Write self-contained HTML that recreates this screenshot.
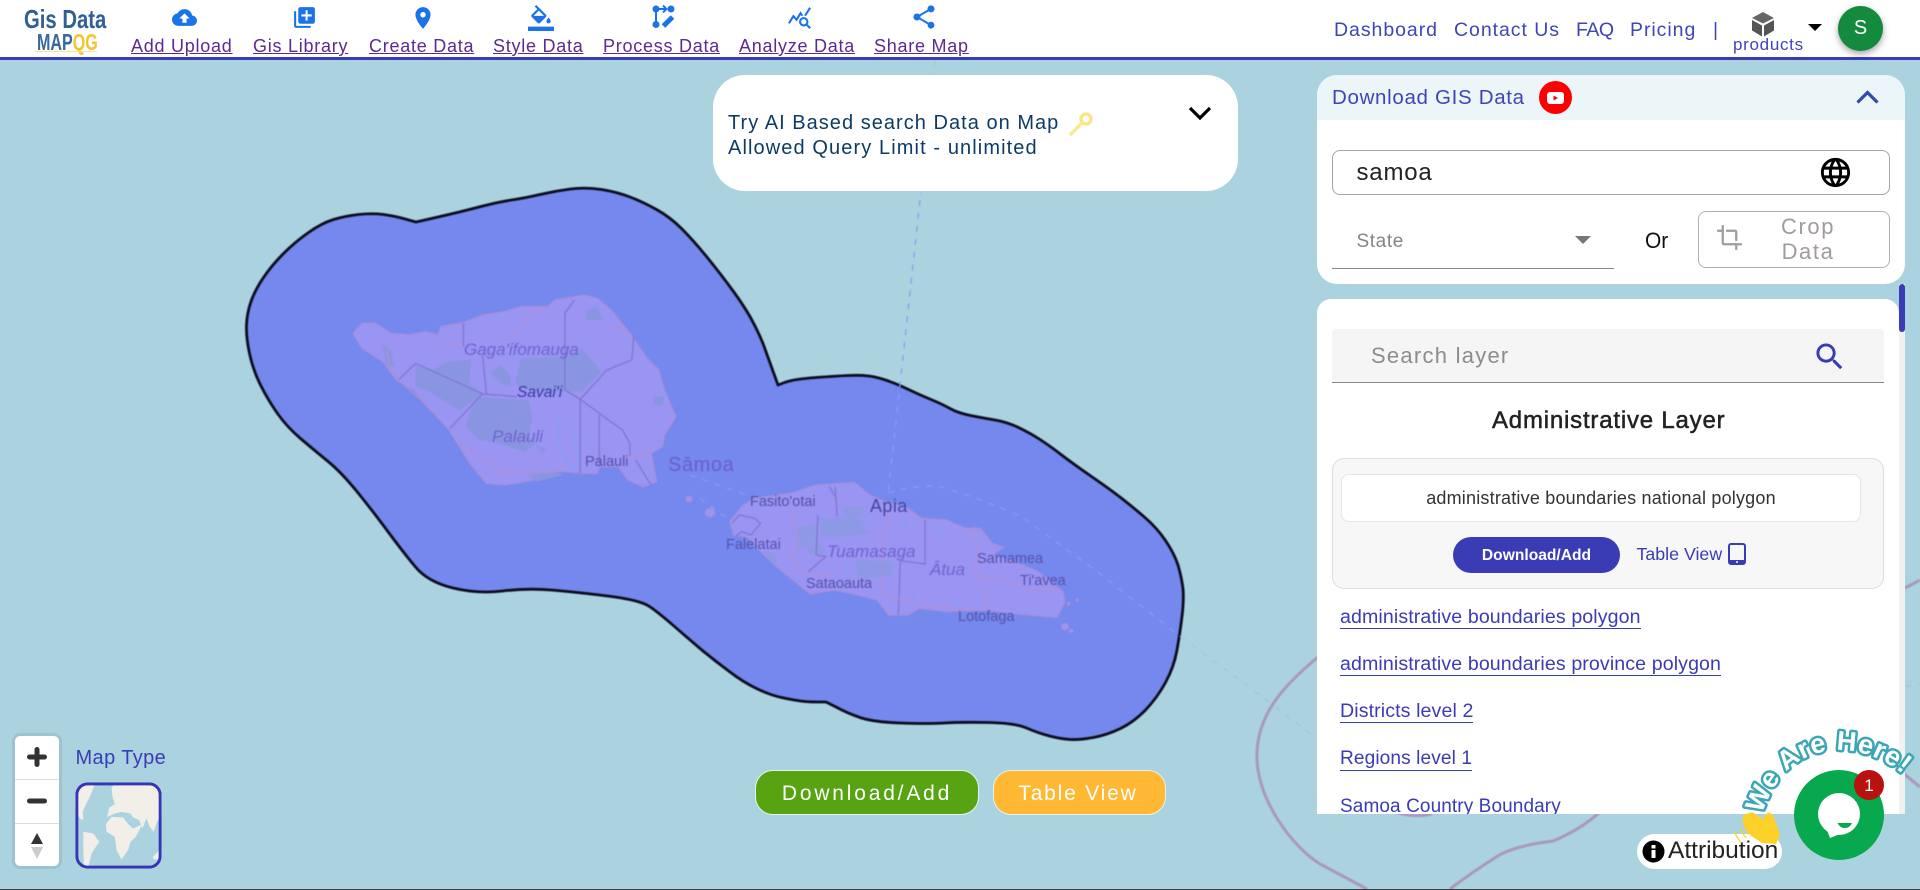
<!DOCTYPE html>
<html lang="en">
<head>
<meta charset="utf-8">
<title>GIS Data MAPOG</title>
<style>
html,body{margin:0;padding:0;width:1920px;height:890px;overflow:hidden;background:#aad3df;font-family:"Liberation Sans",sans-serif}
.a{position:absolute;white-space:nowrap;line-height:1}
#map{position:absolute;left:0;top:0;filter:blur(.45px)}
#hdr{position:absolute;left:0;top:0;width:1920px;height:57px;background:#fff;border-bottom:3px solid #3a3cb5}
.nav{font-size:18px;color:#5b2a92;text-decoration:underline;letter-spacing:.75px;top:37px}
.rn{font-size:19.5px;color:#3f45b8;top:21px;letter-spacing:.95px}
.ic{position:absolute;fill:#1a73e8}
.panel{position:absolute;background:#fff}
.lnk{position:absolute;left:1340px;font-size:19.6px;color:#3a3cb5;white-space:nowrap;border-bottom:1.5px solid #3a3cb5;line-height:22px;letter-spacing:.1px}
.btn{position:absolute;top:770px;height:43px;border:1px solid #e6f2f0;border-radius:18px;color:#fff;text-align:center;font-size:21px;line-height:45px;white-space:nowrap}
</style>
</head>
<body>
<!-- MAP -->
<svg id="map" width="1920" height="890" viewBox="0 0 1920 890">
 <rect width="1920" height="890" fill="#aad3df"/>
 <g fill="none" stroke="#a998bb" stroke-width="3">
  <path d="M1330 647C1290 680 1255 710 1257 760C1259 800 1290 845 1320 864L1367 889"/>
  <path d="M1395 812Q1415 818 1432 814"/>
  <path d="M1600 812Q1580 830 1553 841Q1520 845 1501 854Q1475 870 1450 889"/>
  <path d="M1905 588L1920 580"/>
  <path d="M1903 773L1920 787"/>
 </g>
 <g fill="none" stroke="#a3c3e4" stroke-width="1.3" stroke-dasharray="6 7">
  <path d="M935 60L920 200"/>
  <path d="M1181 637L1240 680 1316 738"/>
  <path d="M1905 686L1920 684"/>
 </g>
 <path fill="#7488ee" stroke="#0c0c1c" stroke-width="2.8" stroke-linejoin="round" d="M416 222L438 217Q460 212 479 207Q498 202 511.5 200Q525 198 540 194.5Q555 191 570.5 189Q586 187 601.5 189.5Q617 192 630 197Q643 202 656.5 209.5Q670 217 681.5 228.5Q693 240 706.5 256.5Q720 273 733.5 291.5Q747 310 754.5 325Q762 340 765 349L778 385L786 382Q795 379 816 377.5Q837 376 848.5 375.5Q860 375 868.5 376Q877 377 887 380.5Q897 384 908.5 389.5Q920 395 931 399.5Q942 404 950 408.5Q958 413 970.5 415.5Q983 418 995 420Q1007 422 1018.5 427.5Q1030 433 1040 439.5Q1050 446 1061 454.5Q1072 463 1091.5 476.5Q1111 490 1122.5 499Q1134 508 1145.5 518Q1157 528 1165.5 540.5Q1174 553 1178 565Q1181.5 577 1183 588.5Q1184 600 1182 616.5Q1180 633 1177 650Q1174 667 1165.5 682.5Q1157 698 1145.5 710Q1134 722 1120.5 728.5Q1107 735 1093.5 737.5Q1080 740 1070.5 739.5Q1061 739 1049.5 736Q1038 733 1026.5 728Q1015 723 988 722.5Q961.5 722 944 723Q927 724 900 723Q873 722 860 717.5Q847 713 836 707L826 702L817 702Q808 702 800.5 701Q793 700 781.5 697.5Q770 695 756.5 688.5Q743 682 730 672Q716.5 662 703 651Q690 640 674.5 626.5Q659 613 649.5 606.5Q640 600 607.5 596Q575 592 551 590Q527 588 502.5 591Q478 594 453 588Q428 582 415.5 567Q403 552 387.5 531Q372 510 356.5 491Q341 472 327.5 461Q314 450 300.5 438.5Q287 427 277.5 413.5Q268 400 260.5 385Q253 370 249.5 353.5Q246 337 246.5 325Q247 313 251 301.5Q255 290 263.5 277.5Q272 265 283.5 253.5Q295 242 308.5 232.5Q322 223 333.5 219.5Q345 216 358.5 214.5Q372 213 383.5 214.5Q395 216 405 219Z"/>
 <g fill="none" stroke="#8a9bf2" stroke-width="1.3" stroke-dasharray="6 7">
  <path d="M920 200L894 440 888 493"/>
  <path d="M888 493Q915 485 938 486Q985 500 1022 517L1099 573 1181 637"/>
  <path d="M690 475L747 495"/>
  <path d="M700 498L732 522"/>
 </g>
 <!-- Savai'i -->
 <g transform="translate(230,170) scale(.3827,.3333)">
  <path fill="#9a94f3" stroke="#a98fd8" stroke-width="1.3" vector-effect="non-scaling-stroke" d="M322 490 345 460 380 460 420 490 470 495 510 485 545 495 550 470 610 458 660 435 720 425 760 410 830 410 850 390 925 375 960 385 1000 425 1045 490 1090 565 1120 600 1135 660 1165 740 1135 795 1130 830 1100 850 1115 935 1080 950 1040 930 1015 890 965 890 960 910 925 910 880 905 850 905 790 930 720 945 670 940 630 885 605 840 570 775 520 715 480 660 435 630 400 575 345 535Z"/>
  <g fill="#8a95e2">
   <path d="M485 585 530 600 570 575 630 568 625 640 660 670 600 720 570 700 520 665 485 650Z"/>
   <path d="M640 680 780 690 790 740 780 800 800 820 770 845 700 820 650 810 615 770Z"/>
   <path d="M745 640 760 565 880 560 920 535 970 605 920 665 870 665 820 665 760 655Z"/>
   <path d="M680 610 705 585 730 610 735 650 710 640Z"/>
   <path d="M930 420 960 410 975 450 930 450Z"/>
   <path d="M395 520 420 540 430 590 410 590Z"/>
   <path d="M1105 680 1135 680 1130 705 1110 705Z"/>
   <path d="M800 825 830 840 815 850Z"/>
   <path d="M780 915 850 905 870 915 800 935Z"/>
  </g>
  <g fill="none" stroke="#7e78d0" stroke-width="1.3">
   <path vector-effect="non-scaling-stroke" d="M485 580 660 672 750 680"/>
   <path vector-effect="non-scaling-stroke" d="M660 672 575 775"/>
   <path vector-effect="non-scaling-stroke" d="M485 580 440 630"/>
   <path vector-effect="non-scaling-stroke" d="M660 555 670 672"/>
   <path vector-effect="non-scaling-stroke" d="M610 460 610 530"/>
   <path vector-effect="non-scaling-stroke" d="M900 390 875 430 875 660 915 688 1025 780 1045 820 1045 860"/>
   <path vector-effect="non-scaling-stroke" d="M915 688 985 600 1050 570 1055 500"/>
   <path vector-effect="non-scaling-stroke" d="M915 688 915 910"/>
   <path vector-effect="non-scaling-stroke" d="M965 735 965 890"/>
   <path vector-effect="non-scaling-stroke" d="M1060 870 1100 945"/>
  </g>
  <g fill="none" stroke="#ae90d4" stroke-width="1.3">
   <path vector-effect="non-scaling-stroke" d="M410 540 415 580 440 630 500 690 570 775"/>
   <path vector-effect="non-scaling-stroke" d="M610 535 550 505"/>
   <path vector-effect="non-scaling-stroke" d="M720 510 765 470 770 440 830 410"/>
   <path vector-effect="non-scaling-stroke" d="M1000 470 1045 495"/>
   <path vector-effect="non-scaling-stroke" d="M600 820 680 880 712 905 712 945"/>
   <path vector-effect="non-scaling-stroke" d="M712 905 850 905 880 880"/>
   <path vector-effect="non-scaling-stroke" d="M1045 860 1100 850"/>
  </g>
  <g fill="none" stroke="#7fa0f5" stroke-width="1.2">
   <path vector-effect="non-scaling-stroke" d="M858 725 860 780 855 830 880 870 890 900"/>
   <path vector-effect="non-scaling-stroke" d="M895 775 905 830 910 870 895 900"/>
  </g>
 </g>
 <!-- Upolu -->
 <g transform="translate(640,440) scale(.3827,.3333)">
  <path fill="#9a94f3" stroke="#a98fd8" stroke-width="1.3" vector-effect="non-scaling-stroke" d="M235 245 270 195 300 175 395 160 460 135 560 128 600 165 640 185 700 205 735 235 800 240 850 265 890 265 920 310 950 322 920 345 1000 375 1040 395 1105 455 1110 485 1090 532 985 522 900 510 800 515 730 505 700 525 650 525 620 480 570 465 510 450 445 462 405 425 355 378 320 340 280 290 245 285Z"/>
  <g fill="#8e99e6">
   <path d="M410 260 460 255 465 300 410 330Z"/>
   <path d="M470 235 570 235 600 280 530 290 470 290Z"/>
   <path d="M565 360 660 365 660 405 570 420Z"/>
   <path d="M435 320 470 310 490 345 440 340Z"/>
   <path d="M320 335 350 340 360 370 340 365Z"/>
   <path d="M530 200 585 200 580 230 535 235Z"/>
  </g>
  <g fill="none" stroke="#7e78d0" stroke-width="1.3">
   <path vector-effect="non-scaling-stroke" d="M465 225 460 345 485 350 440 395"/>
   <path vector-effect="non-scaling-stroke" d="M510 140 515 230"/>
   <path vector-effect="non-scaling-stroke" d="M495 140 510 170"/>
   <path vector-effect="non-scaling-stroke" d="M745 240 745 372 680 362"/>
   <path vector-effect="non-scaling-stroke" d="M680 365 675 525"/>
   <path vector-effect="non-scaling-stroke" d="M240 250 260 225 300 235 315 250 290 285 265 275 250 290"/>
  </g>
  <g fill="none" stroke="#ae90d4" stroke-width="1.3">
   <path vector-effect="non-scaling-stroke" d="M395 200 415 300 400 345 420 395 500 410"/>
   <path vector-effect="non-scaling-stroke" d="M655 225 630 300 635 370 630 465 760 495 850 510 900 510 905 480 890 420 875 395 890 300"/>
   <path vector-effect="non-scaling-stroke" d="M890 405 960 430 1020 450 1100 455"/>
   <path vector-effect="non-scaling-stroke" d="M875 260 865 315"/>
  </g>
  <g fill="none" stroke="#7fa0f5" stroke-width="1.2">
   <path vector-effect="non-scaling-stroke" d="M600 220 570 260"/>
   <path vector-effect="non-scaling-stroke" d="M690 240 695 270"/>
   <path vector-effect="non-scaling-stroke" d="M720 240 715 270"/>
   <path vector-effect="non-scaling-stroke" d="M800 265 770 290"/>
   <path vector-effect="non-scaling-stroke" d="M545 360 535 400"/>
   <path vector-effect="non-scaling-stroke" d="M610 365 590 400"/>
   <path vector-effect="non-scaling-stroke" d="M720 450 710 480"/>
   <path vector-effect="non-scaling-stroke" d="M830 470 835 500"/>
   <path vector-effect="non-scaling-stroke" d="M890 480 870 495"/>
  </g>
  <g fill="#9a94f3" stroke="#a98fd8" stroke-width="1.2">
   <ellipse vector-effect="non-scaling-stroke" cx="128" cy="177" rx="8" ry="8"/>
   <ellipse vector-effect="non-scaling-stroke" cx="183" cy="218" rx="12" ry="13"/>
   <ellipse vector-effect="non-scaling-stroke" cx="1110" cy="560" rx="9" ry="9"/>
   <ellipse vector-effect="non-scaling-stroke" cx="1127" cy="573" rx="5" ry="4"/>
   <ellipse vector-effect="non-scaling-stroke" cx="1142" cy="480" rx="3" ry="3"/>
   <ellipse vector-effect="non-scaling-stroke" cx="1120" cy="491" rx="3" ry="5"/>
  </g>
 </g>
 <!-- labels -->
 <g font-family="'Liberation Sans',sans-serif">
  <g font-style="italic" fill="#6f64d0" font-size="17">
   <text x="464" y="355">Gaga'ifomauga</text>
   <text x="492" y="442">Palauli</text>
   <text x="827" y="557">Tuamasaga</text>
   <text x="930" y="575">Ātua</text>
  </g>
  <text x="517" y="397" font-style="italic" font-size="15.5" fill="#3a3a9d">Savai'i</text>
  <text x="668" y="471" font-size="20" letter-spacing=".6" fill="#6b5fc7">Sāmoa</text>
  <text x="870" y="512" font-size="18" letter-spacing=".4" fill="#4a44a0">Apia</text>
  <g font-size="14.5" fill="#5551a8">
   <text x="585" y="466">Palauli</text>
   <text x="750" y="506">Fasito'otai</text>
   <text x="726" y="549">Falelatai</text>
   <text x="977" y="563">Samamea</text>
   <text x="1020" y="585">Ti'avea</text>
   <text x="806" y="588">Sataoauta</text>
   <text x="958" y="621">Lotofaga</text>
  </g>
 </g>
</svg>
<div class="a" style="left:0;top:889px;width:1920px;height:1px;background:#3a3f3a"></div>

<!-- HEADER -->
<div id="hdr"></div>
<div class="a" style="left:24px;top:6px;font-size:26px;font-weight:bold;color:#2f5f94;transform:scaleX(.78);transform-origin:left top">Gis Data</div>
<div class="a" style="left:37px;top:31px;font-size:23px;font-weight:bold;color:#3868a0;transform:scaleX(.7);transform-origin:left top">MAP<span style="color:#f4c430">QG</span></div>
<div class="a" style="left:35px;top:51px;width:62px;height:1px;background:#f9e58f"></div>

<svg class="ic" style="left:172px;top:4.5px" width="25" height="25" viewBox="0 0 24 24"><path d="M19.35 10.04C18.67 6.59 15.64 4 12 4 9.11 4 6.6 5.64 5.35 8.04 2.34 8.36 0 10.91 0 14c0 3.31 2.69 6 6 6h13c2.76 0 5-2.24 5-5 0-2.64-2.05-4.78-4.65-4.96zM14 13v4h-4v-4H7l5-5 5 5h-3z"/></svg>
<svg class="ic" style="left:292px;top:4.5px" width="25" height="25" viewBox="0 0 24 24"><path d="M4 6H2v14c0 1.1.9 2 2 2h14v-2H4V6zm16-4H8c-1.1 0-2 .9-2 2v12c0 1.1.9 2 2 2h12c1.1 0 2-.9 2-2V4c0-1.1-.9-2-2-2zm-1 9h-4v4h-2v-4H9V9h4V5h2v4h4v2z"/></svg>
<svg class="ic" style="left:410px;top:4.5px" width="26" height="26" viewBox="0 0 24 24"><path d="M12 2C8.13 2 5 5.13 5 9c0 5.25 7 13 7 13s7-7.75 7-13c0-3.87-3.13-7-7-7zm0 9.5c-1.38 0-2.5-1.12-2.5-2.5s1.12-2.5 2.5-2.5 2.5 1.12 2.5 2.5-1.12 2.5-2.5 2.5z"/></svg>
<svg class="ic" style="left:528px;top:4.5px" width="26" height="26" viewBox="0 0 24 24"><path d="M16.56 8.94L7.62 0 6.21 1.41l2.38 2.38-5.15 5.15c-.59.59-.59 1.54 0 2.12l5.5 5.5c.29.29.68.44 1.06.44s.77-.15 1.06-.44l5.5-5.5c.59-.58.59-1.53 0-2.12zM5.21 10L10 5.21 14.79 10H5.21zM19 11.5s-2 2.17-2 3.5c0 1.1.9 2 2 2s2-.9 2-2c0-1.33-2-3.5-2-3.5zM0 20h24v4H0z"/></svg>
<svg style="position:absolute;left:645px;top:0" width="36" height="36" viewBox="645 0 36 36"><g fill="#1a73e8" stroke="none"><circle cx="656" cy="9" r="3.5"/><circle cx="656" cy="24.5" r="3.5"/><circle cx="671" cy="9" r="3.5"/></g><path d="M656 9V24.5M658 9h8M663 5.5l3.5 3.5-3.5 3.5" fill="none" stroke="#1a73e8" stroke-width="2"/><path d="M663.5 26l9-9" stroke="#1a73e8" stroke-width="5" fill="none"/></svg>
<svg class="ic" style="left:787px;top:5px" width="25" height="25" viewBox="0 0 24 24"><path d="M19.88 18.47c.44-.7.7-1.51.7-2.39 0-2.49-2.01-4.5-4.5-4.5s-4.5 2.01-4.5 4.5 2.01 4.5 4.49 4.5c.88 0 1.7-.26 2.39-.7L21.58 23 23 21.58l-3.12-3.11zm-3.8.11c-1.38 0-2.5-1.12-2.5-2.5s1.12-2.5 2.5-2.5 2.5 1.12 2.5 2.5-1.12 2.5-2.5 2.5zm-.36-8.5c-.74.02-1.45.18-2.1.45l-.55-.83-3.8 6.18-3.01-3.52-3.63 5.81L1 17l5-8 3 3.5L13 6l2.72 4.08zm2.59.5c-.64-.28-1.33-.45-2.05-.49L21.38 2 23 3.18l-4.69 7.4z"/></svg>
<svg class="ic" style="left:909.5px;top:2.5px" width="28" height="28" viewBox="0 0 24 24"><path d="M18 16.08c-.76 0-1.44.3-1.96.77L8.91 12.7c.05-.23.09-.46.09-.7s-.04-.47-.09-.7l7.05-4.11c.54.5 1.25.81 2.04.81 1.66 0 3-1.34 3-3s-1.34-3-3-3-3 1.34-3 3c0 .24.04.47.09.7L8.04 9.81C7.5 9.31 6.79 9 6 9c-1.66 0-3 1.34-3 3s1.34 3 3 3c.79 0 1.5-.31 2.04-.81l7.12 4.16c-.05.21-.08.43-.08.65 0 1.61 1.31 2.92 2.92 2.92 1.61 0 2.92-1.31 2.92-2.92s-1.31-2.92-2.92-2.92z"/></svg>

<span class="a nav" style="left:131px">Add Upload</span>
<span class="a nav" style="left:253px">Gis Library</span>
<span class="a nav" style="left:369px">Create Data</span>
<span class="a nav" style="left:493px">Style Data</span>
<span class="a nav" style="left:603px">Process Data</span>
<span class="a nav" style="left:739px">Analyze Data</span>
<span class="a nav" style="left:874px">Share Map</span>

<span class="a rn" style="left:1334px">Dashboard</span>
<span class="a rn" style="left:1454px">Contact Us</span>
<span class="a rn" style="left:1576px;letter-spacing:-.5px">FAQ</span>
<span class="a rn" style="left:1630px">Pricing</span>
<span class="a rn" style="left:1713px">|</span>
<svg style="position:absolute;left:1751px;top:11px" width="24" height="26" viewBox="0 0 24 26"><path d="M12 1L23 7 12 12.5 1 7Z" fill="#666"/><path d="M1 9L11 14.5V25.5L1 19.5Z" fill="#555"/><path d="M23 9L13 14.5V25.5L23 19.5Z" fill="#555"/></svg>
<span class="a" style="left:1733px;top:36px;font-size:17px;color:#3f45b8;letter-spacing:.7px">products</span>
<svg style="position:absolute;left:1808px;top:24px" width="14" height="7"><path d="M0 0H14L7 7Z" fill="#000"/></svg>
<div class="a" style="left:1838px;top:6px;width:45px;height:45px;border-radius:50%;background:#138a3d;box-shadow:0 3px 7px rgba(0,0,0,.35);color:#fff;font-size:20px;line-height:45px;text-align:center">S</div>

<!-- AI BOX -->
<div class="panel" style="left:713px;top:75px;width:525px;height:116px;border-radius:32px"></div>
<div class="a" style="left:728px;top:113px;font-size:20px;letter-spacing:1.03px;color:#0d3b66">Try AI Based search Data on Map</div>
<div class="a" style="left:728px;top:138px;font-size:20px;letter-spacing:1.1px;color:#0d3b66">Allowed Query Limit - unlimited</div>
<svg style="position:absolute;left:1068px;top:111px" width="26" height="26" viewBox="0 0 26 26"><path d="M2 24L15 11" stroke="#fbe98f" stroke-width="3.5" fill="none"/><circle cx="18" cy="8" r="5" fill="none" stroke="#fbe58a" stroke-width="3.5"/></svg>
<svg style="position:absolute;left:1187px;top:105px" width="26" height="16"><path d="M3 3L13 13 23 3" fill="none" stroke="#000" stroke-width="3.2"/></svg>

<!-- DOWNLOAD PANEL -->
<div class="panel" style="left:1317px;top:75px;width:588px;height:209px;border-radius:20px;overflow:hidden">
 <div style="height:45px;background:#ecf5f8"></div>
</div>
<div class="a" style="left:1332px;top:88px;font-size:20.5px;letter-spacing:.68px;color:#3f45b8">Download GIS Data</div>
<div class="a" style="left:1539px;top:81px;width:33px;height:33px;border-radius:50%;background:#f00"></div>
<svg style="position:absolute;left:1547px;top:92px" width="17" height="12" viewBox="0 0 17 12"><rect width="17" height="12" rx="3" fill="#fff"/><path d="M6.5 3.5L11 6 6.5 8.5Z" fill="#f00"/></svg>
<svg style="position:absolute;left:1855px;top:89px" width="25" height="17"><path d="M2.5 13.5L12.5 3.5 22.5 13.5" fill="none" stroke="#2f4bb0" stroke-width="3.2"/></svg>

<div class="a" style="left:1332px;top:150px;width:556px;height:43px;border:1px solid #a5a5a5;border-radius:8px"></div>
<div class="a" style="left:1356.5px;top:161px;font-size:24px;letter-spacing:.8px;color:#222">samoa</div>
<svg style="position:absolute;left:1818px;top:155px" width="35" height="35" viewBox="0 0 24 24"><path fill="#000" d="M11.99 2C6.47 2 2 6.48 2 12s4.47 10 9.99 10C17.52 22 22 17.52 22 12S17.52 2 11.99 2zm6.93 6h-2.95c-.32-1.25-.78-2.45-1.38-3.56 1.84.63 3.37 1.91 4.33 3.56zM12 4.04c.83 1.2 1.48 2.53 1.91 3.96h-3.82c.43-1.43 1.08-2.76 1.91-3.96zM4.26 14C4.1 13.36 4 12.69 4 12s.1-1.36.26-2h3.38c-.08.66-.14 1.32-.14 2 0 .68.06 1.34.14 2H4.26zm.82 2h2.95c.32 1.25.78 2.45 1.38 3.56-1.84-.63-3.37-1.9-4.33-3.56zm2.95-8H5.08c.96-1.66 2.49-2.93 4.33-3.56C8.81 5.55 8.35 6.75 8.03 8zM12 19.96c-.83-1.2-1.48-2.53-1.91-3.96h3.82c-.43 1.43-1.08 2.76-1.91 3.96zM14.34 14H9.66c-.09-.66-.16-1.32-.16-2 0-.68.07-1.35.16-2h4.68c.09.65.16 1.32.16 2 0 .68-.07 1.34-.16 2zm.25 5.56c.6-1.11 1.06-2.31 1.38-3.56h2.95c-.96 1.65-2.49 2.93-4.33 3.56zM16.36 14c.08-.66.14-1.32.14-2 0-.68-.06-1.34-.14-2h3.38c.16.64.26 1.31.26 2s-.1 1.36-.26 2h-3.38z"/></svg>

<div class="a" style="left:1356.5px;top:232px;font-size:19px;letter-spacing:.6px;color:#858585">State</div>
<svg style="position:absolute;left:1575px;top:236px" width="16" height="8"><path d="M0 0H16L8 8Z" fill="#777"/></svg>
<div class="a" style="left:1332px;top:268px;width:282px;height:1px;background:#888"></div>
<div class="a" style="left:1645px;top:230px;font-size:22px;color:#111;transform:scaleX(.95);transform-origin:left top">Or</div>
<div class="a" style="left:1698px;top:211px;width:190px;height:55px;border:1px solid #b5aeae;border-radius:8px"></div>
<svg style="position:absolute;left:1716px;top:224px" width="27" height="27" viewBox="0 0 24 24"><path fill="#a39a9a" d="M17 15h2V7c0-1.1-.9-2-2-2H9v2h8v8zM7 17V1H5v4H1v2h4v10c0 1.1.9 2 2 2h10v4h2v-4h4v-2H7z"/></svg>
<div class="a" style="left:1769px;top:216px;width:78px;text-align:center;font-size:22px;letter-spacing:1.6px;color:#a39b9b">Crop</div>
<div class="a" style="left:1769px;top:241px;width:78px;text-align:center;font-size:22px;letter-spacing:1.6px;color:#a39b9b">Data</div>

<!-- LAYER PANEL -->
<div class="a" style="left:1899px;top:284px;width:6px;height:530px;background:#f1f1f1"></div>
<div class="a" style="left:1899px;top:284px;width:6px;height:48px;background:#3a3cb5;border-radius:3px"></div>
<div class="panel" style="left:1317px;top:299px;width:582px;height:515px;border-radius:14px 14px 0 0;overflow:hidden"></div>
<div class="a" style="left:1332px;top:329px;width:552px;height:53px;background:#f5f5f5;border-bottom:1.5px solid #888;border-radius:4px 4px 0 0"></div>
<div class="a" style="left:1371px;top:345px;font-size:22px;letter-spacing:1.25px;color:#8c8c8c">Search layer</div>
<svg style="position:absolute;left:1811.5px;top:339px" width="35.5" height="35.5" viewBox="0 0 24 24"><path fill="#3a3cb5" d="M15.5 14h-.79l-.28-.27C15.41 12.59 16 11.11 16 9.5 16 5.91 13.09 3 9.5 3S3 5.91 3 9.5 5.91 16 9.5 16c1.61 0 3.09-.59 4.23-1.57l.27.28v.79l5 4.99L20.49 19l-4.99-5zm-6 0C7.01 14 5 11.99 5 9.5S7.01 5 9.5 5 14 7.01 14 9.5 11.99 14 9.5 14z"/></svg>
<div class="a" style="left:1492px;top:409px;font-size:24px;letter-spacing:.8px;color:#222;-webkit-text-stroke:.5px #222">Administrative Layer</div>

<div class="a" style="left:1332px;top:458px;width:550px;height:129px;background:#f7f7f7;border:1px solid #ddd;border-radius:12px"></div>
<div class="a" style="left:1341px;top:474px;width:518px;height:46px;background:#fff;border:1px solid #e5e5e5;border-radius:8px;text-align:center;font-size:18px;line-height:46px;letter-spacing:.2px;color:#333">administrative boundaries national polygon</div>
<div class="a" style="left:1453px;top:537px;width:167px;height:36px;background:#3a3cb5;border-radius:18px;color:#fff;font-weight:bold;font-size:15.6px;line-height:37px;text-align:center">Download/Add</div>
<div class="a" style="left:1636.5px;top:546px;font-size:17.8px;color:#3a3cb5">Table View</div>
<svg style="position:absolute;left:1728px;top:543px" width="18" height="22" viewBox="0 0 18 22"><rect x="1" y="1" width="16" height="20" rx="2" fill="none" stroke="#3a3cb5" stroke-width="2"/><rect x="1" y="17" width="16" height="4" fill="#3a3cb5"/><circle cx="9" cy="19" r="1" fill="#fff"/></svg>

<div class="lnk" style="top:606px">administrative boundaries polygon</div>
<div class="lnk" style="top:653px">administrative boundaries province polygon</div>
<div class="lnk" style="top:700px">Districts level 2</div>
<div class="lnk" style="top:748px;font-size:19.1px">Regions level 1</div>
<div style="position:absolute;left:1340px;top:790px;height:24px;width:400px;overflow:hidden"><div style="font-size:19px;line-height:34px;color:#3a3cb5;white-space:nowrap;letter-spacing:.1px">Samoa Country Boundary</div></div>

<!-- MAP CONTROLS -->
<div class="a" style="left:12px;top:733px;width:44px;height:130px;border:3px solid #9ec3d0;border-radius:8px;background:#fff"></div>
<div class="a" style="left:15px;top:779px;width:44px;height:1px;background:#ddd"></div>
<div class="a" style="left:15px;top:823px;width:44px;height:1px;background:#ddd"></div>
<svg style="position:absolute;left:15px;top:736px" width="44" height="130" viewBox="15 736 44 130"><path d="M29.5 757H44.5M37 749.5V764.5" stroke="#333" stroke-width="5" stroke-linecap="round"/><path d="M29.5 801H44.5" stroke="#333" stroke-width="5" stroke-linecap="round"/><path d="M37 833L43 844H31Z" fill="#333"/><path d="M37 859L43 847H31Z" fill="#ccc"/></svg>
<div class="a" style="left:75.5px;top:748px;font-size:20px;letter-spacing:.4px;color:#3a3cb5">Map Type</div>
<svg style="position:absolute;left:75px;top:782px" width="87" height="87" viewBox="225 245 262 262">
 <defs><clipPath id="tc"><rect x="226" y="246" width="260" height="260" rx="36"/></clipPath></defs>
 <g clip-path="url(#tc)">
  <rect x="225" y="245" width="262" height="262" fill="#aad3df"/>
  <g fill="#f2efe9">
   <path d="M318 372 335 350 370 352 385 372 400 385 428 372 408 410 392 425 385 450 365 478 350 450 345 410 320 395Z"/>
   <path d="M335 262 345 250 490 250 490 340 472 365 462 395 450 380 440 355 428 385 418 360 400 352 392 340 365 335 345 340 322 350 328 322 345 312 338 290Z"/>
   <path d="M225 285 245 250 285 250 272 285 258 312 248 335 250 360 240 355 225 330Z"/>
   <path d="M250 395 280 400 298 425 275 460 264 506 252 506 250 440Z"/>
   <path d="M460 470 490 440 490 478 462 478Z"/>
  </g>
  <rect x="230.5" y="250.5" width="251" height="251" rx="33" fill="none" stroke="#3535b5" stroke-width="9"/>
 </g>
</svg>

<!-- BOTTOM BUTTONS -->
<div class="btn" style="left:755px;width:222px;background:#57a311;letter-spacing:2.8px">Download/Add</div>
<div class="btn" style="left:993px;width:171px;background:#ffb833;letter-spacing:1.8px;text-indent:-3px">Table View</div>

<!-- ATTRIBUTION -->
<div class="a" style="left:1637px;top:834px;width:145px;height:35px;border-radius:18px;background:#fff"></div>
<svg style="position:absolute;left:1642px;top:840px" width="23" height="23" viewBox="0 0 23 23"><circle cx="11.5" cy="11.5" r="11" fill="#000"/><rect x="9.5" y="10" width="4" height="8" fill="#fff"/><rect x="9.5" y="5" width="4" height="3.5" fill="#fff"/></svg>
<div class="a" style="left:1668px;top:839px;font-size:24.5px;color:#222">Attribution</div>

<!-- CHAT WIDGET -->
<svg style="position:absolute;left:1600px;top:720px" width="320" height="170" viewBox="1600 720 320 170">
 <defs><path id="arc" d="M1762 814Q1783 752 1838 750 1880 750 1915 785"/></defs>
 <text font-family="'Liberation Sans',sans-serif" font-weight="bold" font-size="27" letter-spacing=".8" fill="#fff" stroke="#3ba6b6" stroke-width="5" stroke-linejoin="round" paint-order="stroke"><textPath href="#arc">We Are Here!</textPath></text>
 <circle cx="1839" cy="815" r="45" fill="#08a84e"/>
 <circle cx="1839" cy="814" r="21" fill="#fff"/>
 <path d="M1825 825L1830 838 1845 832Z" fill="#fff"/>
 <path d="M1837.5 823H1852Q1850 828 1844.5 828 1840 828 1837.5 823Z" fill="#08a84e"/>
 <circle cx="1869" cy="785" r="15" fill="#b91010"/>
 <text x="1869" y="791" text-anchor="middle" font-family="'Liberation Sans',sans-serif" font-size="17" fill="#fff">1</text>
 <path d="M1743 815 1752 812 1763 819 1768 812 1773 815 1780 835 1776 844 1762 843 1747 833 1743 824Z" fill="#fcd12a"/>
 <path d="M1734 832 1741 843M1740 829 1746 838" stroke="#fcd12a" stroke-width="1.2" fill="none"/>
</svg>
</body>
</html>
